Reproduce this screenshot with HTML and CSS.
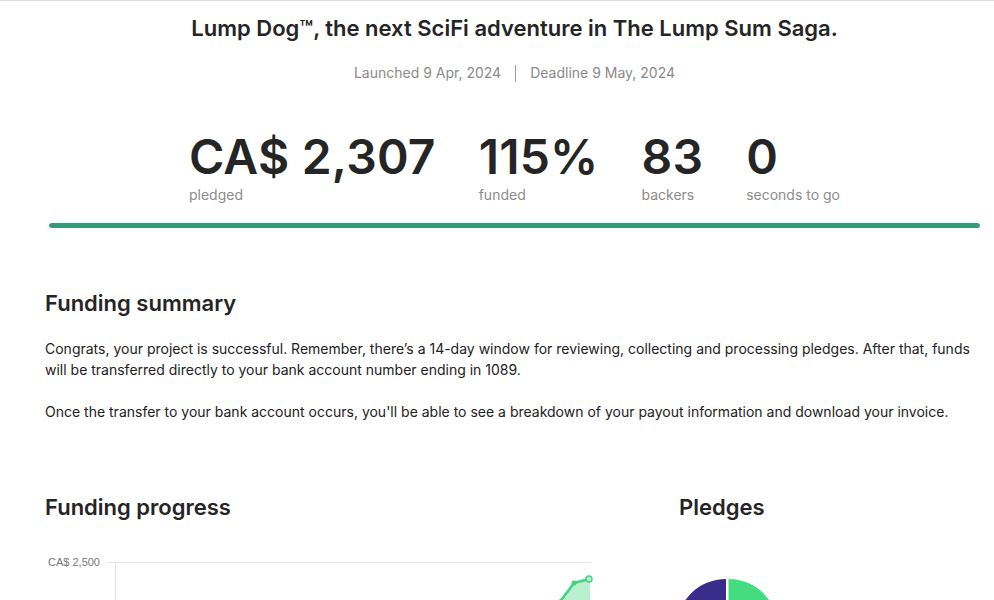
FILE: index.html
```html
<!DOCTYPE html>
<html lang="en">
<head>
<meta charset="utf-8">
<title>Lump Dog</title>
<link rel="stylesheet" href="styles.css">
</head>
<body>
<div class="page">
  <header class="hero">
    <h1 class="title">Lump Dog™, the next SciFi adventure in The Lump Sum Saga.</h1>
    <div class="meta">
      <span>Launched 9 Apr, 2024</span>
      <span class="sep"></span>
      <span>Deadline 9 May, 2024</span>
    </div>
    <div class="stats">
      <div class="stat"><div class="num">CA$ 2,307</div><div class="lbl">pledged</div></div>
      <div class="stat"><div class="num">115%</div><div class="lbl">funded</div></div>
      <div class="stat"><div class="num">83</div><div class="lbl">backers</div></div>
      <div class="stat"><div class="num">0</div><div class="lbl">seconds to go</div></div>
    </div>
    <div class="bar"><div class="bar-fill"></div></div>
  </header>

  <section class="summary">
    <h2 class="h2">Funding summary</h2>
    <p class="p">Congrats, your project is successful. Remember, there’s a 14-day window for reviewing, collecting and processing pledges. After that, funds will be transferred directly to your bank account number ending in 1089.</p>
    <p class="p">Once the transfer to your bank account occurs, you'll be able to see a breakdown of your payout information and download your invoice.</p>
  </section>

  <section class="charts">
    <div class="col-progress">
      <h2 class="h2">Funding progress</h2>
      <svg class="chart" width="560" height="60" viewBox="0 0 560 60">
        <text x="3" y="17.5" class="axis-label">CA$ 2,500</text>
        <line x1="62" y1="14.5" x2="546" y2="14.5" stroke="#e4e4e4" stroke-width="1"/>
        <line x1="70.5" y1="14" x2="70.5" y2="60" stroke="#e4e4e4" stroke-width="1"/>
        <polygon points="506,60 517,51 529,35 544,31 545,31 545,60" fill="#b8f0cf"/>
        <polyline points="506,60 517,51 529,35 544,31" fill="none" stroke="#45d27e" stroke-width="2.5" stroke-linejoin="round"/>
        <circle cx="529" cy="35" r="2.5" fill="#45d27e"/>
        <circle cx="544" cy="31" r="3" fill="#b8f0cf" stroke="#45d27e" stroke-width="1.5"/>
      </svg>
    </div>
    <div class="col-pledges">
      <h2 class="h2">Pledges</h2>
      <svg class="pie" width="120" height="60" viewBox="0 0 120 60">
        <path d="M47 81 L47 31 A50 50 0 0 0 47 131 Z" fill="#3a2c8b"/>
        <path d="M49.5 81 L49.5 31 A50 50 0 0 1 49.5 131 Z" fill="#44dc7f"/>
      </svg>
    </div>
  </section>
</div>
</body>
</html>
```

FILE: styles.css
```css
* { box-sizing: border-box; }

html, body {
  margin: 0;
  padding: 0;
  background: #ffffff;
}

body {
  font-family: Inter, "Noto Sans", "Liberation Sans", sans-serif;
  color: #282828;
  border-top: 1px solid #dcdcdc;
  overflow: hidden;
}

.page {
  padding: 0 10px 0 45px;
}

.hero {
  display: flex;
  flex-direction: column;
  align-items: center;
}

.title {
  margin: 13px 0 0;
  font-size: 22px;
  line-height: 28px;
  font-weight: 600;
  letter-spacing: 0;
  color: #252525;
}

.meta {
  margin-top: 21px;
  display: flex;
  align-items: center;
  gap: 14px;
  font-size: 14px;
  line-height: 20px;
  color: #8a8a8a;
}

.sep {
  width: 1px;
  height: 17px;
  background: #9a9a9a;
}

.stats {
  margin-top: 45px;
  display: flex;
  gap: 43px;
}

.stat {
  display: flex;
  flex-direction: column;
}

.num {
  font-size: 48px;
  line-height: 58px;
  font-weight: 600;
  letter-spacing: 0.2px;
  color: #252525;
}

.lbl {
  font-size: 14px;
  line-height: 17px;
  color: #8c8c8c;
}

.bar {
  align-self: stretch;
  margin: 20px 4px 0;
  height: 5px;
  border-radius: 3px;
  background: #e6e6e6;
  overflow: hidden;
}

.bar-fill {
  width: 100%;
  height: 100%;
  background: #339b75;
  border-radius: 3px;
}

.h2 {
  margin: 0;
  font-size: 22px;
  line-height: 28px;
  font-weight: 600;
  color: #252525;
}

.summary {
  margin-top: 61px;
}

.p {
  margin: 21px 0 0;
  font-size: 14px;
  line-height: 21px;
  color: #222;
}

.charts {
  margin-top: 71px;
  display: flex;
}

.col-progress {
  width: 634px;
}

.col-pledges {
  flex: 1;
}

.chart {
  display: block;
  margin-top: 27px;
}

.axis-label {
  font-family: "Liberation Sans", Arial, sans-serif;
  font-size: 11px;
  fill: #777;
}

.pie {
  display: block;
  margin-top: 27px;
}
```
